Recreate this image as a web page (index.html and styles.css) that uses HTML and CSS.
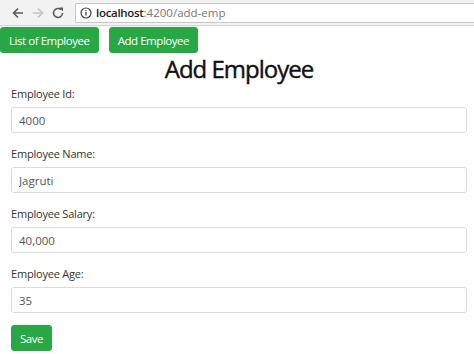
FILE: index.html
```html
<!DOCTYPE html>
<html lang="en">

<head>
  <meta charset="UTF-8">
  <meta name="viewport" content="width=device-width, initial-scale=1.0">
  <title>Add Employee</title>
  <link rel="stylesheet" href="styles.css">
</head>

<body>

  <div class="chrome">
    <span class="nav-icon">
      <svg width="14" height="14" viewBox="0 0 14 14"><path d="M12 7H2.5M7 2.5L2.5 7 7 11.5" fill="none" stroke="#5a5a5a" stroke-width="1.6"/></svg>
    </span>
    <span class="nav-icon">
      <svg width="14" height="14" viewBox="0 0 14 14"><path d="M2 7h9.5M7 2.5L11.5 7 7 11.5" fill="none" stroke="#c4c4c4" stroke-width="1.6"/></svg>
    </span>
    <span class="nav-icon">
      <svg width="14" height="14" viewBox="0 0 14 14"><path d="M11.5 7A4.5 4.5 0 1 1 10 3.6" fill="none" stroke="#5a5a5a" stroke-width="1.6"/><path d="M8 1.5h4v4z" fill="#5a5a5a"/></svg>
    </span>
    <div class="address">
      <svg width="12" height="12" viewBox="0 0 12 12"><circle cx="6" cy="6" r="5" fill="none" stroke="#444" stroke-width="1.2"/><path d="M6 5v3.6M6 3.2v1" stroke="#444" stroke-width="1.3"/></svg>
      <span class="url"><span class="host">localhost</span>:4200/add-emp</span>
    </div>
  </div>

  <div class="menu">
    <button class="btn">List of Employee</button>
    <button class="btn">Add Employee</button>
  </div>

  <div class="container">
    <h2 class="title">Add Employee</h2>

    <form>
      <div class="form-group">
        <label for="empId">Employee Id:</label>
        <input type="text" id="empId" class="form-control" value="4000">
      </div>
      <div class="form-group">
        <label for="empName">Employee Name:</label>
        <input type="text" id="empName" class="form-control" value="Jagruti">
      </div>
      <div class="form-group">
        <label for="empSalary">Employee Salary:</label>
        <input type="text" id="empSalary" class="form-control" value="40,000">
      </div>
      <div class="form-group">
        <label for="empAge">Employee Age:</label>
        <input type="text" id="empAge" class="form-control" value="35">
      </div>
      <button type="submit" class="btn">Save</button>
    </form>
  </div>

</body>

</html>
```

FILE: styles.css
```css
body {
  margin: 0;
  font-family: 'Open Sans', 'Noto Sans', sans-serif;
  color: #212529;
  background-color: #fff;
  overflow: hidden;
}

/* barra del browser */
.chrome {
  display: flex;
  align-items: center;
  height: 25px;
  background-color: #f2f2f2;
  border-bottom: 1px solid #d4d4d4;
  padding-left: 8px;
}

.nav-icon {
  display: flex;
  width: 20px;
  justify-content: center;
}

.address {
  display: flex;
  align-items: center;
  gap: 4px;
  flex: 1;
  height: 18px;
  margin-left: 7px;
  padding-left: 4px;
  background-color: #fff;
  border: 1px solid #c8c8c8;
  border-right: none;
  border-radius: 2px 0 0 2px;
  font-size: 11.5px;
}

.url {
  color: #777;
}

.host {
  color: #222;
  font-weight: 600;
  letter-spacing: -0.3px;
}

.menu {
  display: flex;
  gap: 10px;
  margin-top: 1px;
}

.btn {
  height: 26px;
  padding: 0 8px;
  background-color: #28a745;
  color: #fff;
  border: 1px solid #28a745;
  border-radius: 3px;
  font-family: inherit;
  font-size: 11.5px;
  letter-spacing: -0.45px;
  cursor: pointer;
}

.container {
  padding: 0 7px 0 11px;
}

.title {
  margin: 2px 0 2px;
  font-size: 24px;
  line-height: 28px;
  font-weight: 400;
  letter-spacing: -1px;
  text-align: center;
  color: #111;
  -webkit-text-stroke: 0.4px #111;
}

.form-group {
  margin-bottom: 12px;
}

.form-group label {
  display: block;
  margin-bottom: 4px;
  font-size: 11px;
  line-height: 18px;
  letter-spacing: -0.2px;
  color: #333;
}

.form-control {
  display: block;
  box-sizing: border-box;
  width: 100%;
  height: 26px;
  padding: 0 7px;
  border: 1px solid #dcdcdc;
  border-radius: 3px;
  font-family: inherit;
  font-size: 11.5px;
  color: #555;
}
```
